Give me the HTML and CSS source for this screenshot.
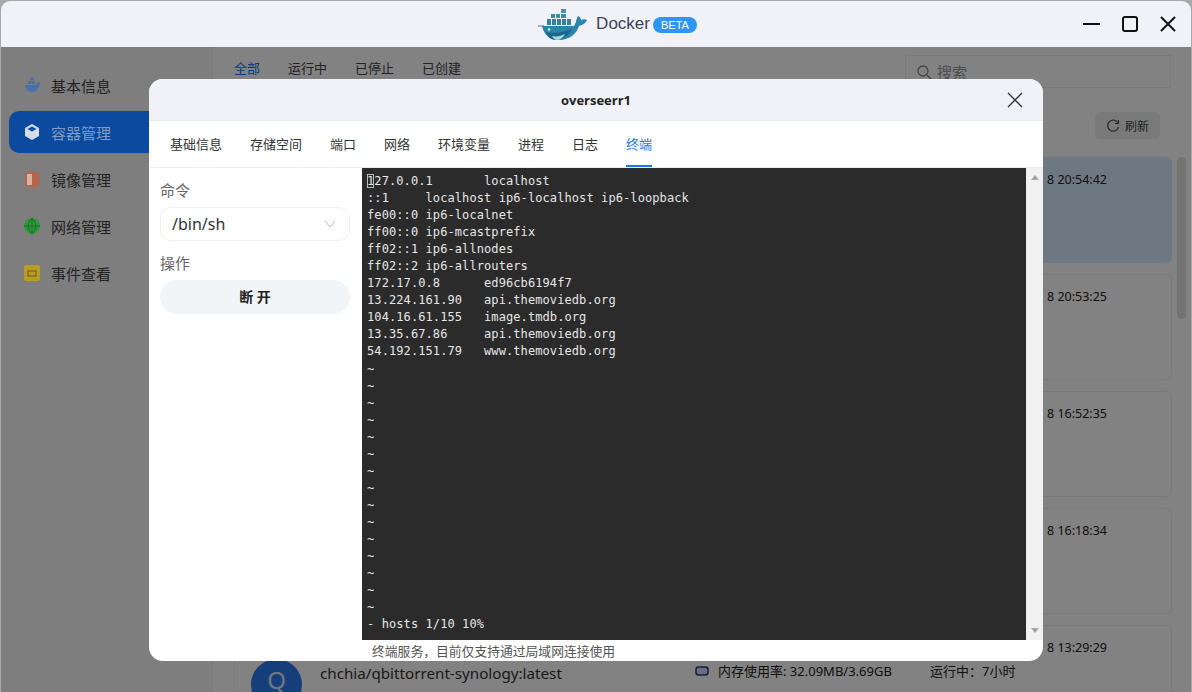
FILE: index.html
```html
<!doctype html>
<html>
<head>
	<meta charset="utf-8">
	<title>Docker</title>
	<link rel="stylesheet" href="styles.css">
</head>
<body>
<div class="app">
	<div class="titlebar">
		<div class="brand">
			<svg class="whale" width="50" height="32" viewBox="0 0 50 32">
				<path fill="#4a95b3" d="M23 0h5v4h-5z"/>
				<path fill="#3f8aa9" d="M13 5h4v4h-4zM18 5h4v4h-4zM23 5h5v4h-5z"/>
				<path fill="#35809f" d="M9 10h4v6H9zM14 10h4v6h-4zM19 10h4v6h-4zM24 10h4v6h-4zM29 10h4v6h-4z"/>
				<path fill="#5f6d75" d="M0 16.500h6v1H0z"/>
				<path fill="#2a84ab" d="M4 17H36c2-2 2-7 4-10l2 1c0 1 1 2 1 3 2-1 4-1 6 0-1 3-4 5-8 6-2 7-9 14-20 14C12 31 6 26 4 17z"/>
				<path fill="#1c678b" d="M8 23c8 2 18 0 26-3-3 6-8 11-16 11-5 0-8-3-10-8z"/>
				<path fill="#a5d6e4" d="M14 27c5 1 9 0 13-2-2 4-5 6-8 6-2 0-4-2-5-4z"/>
				<circle cx="11" cy="20.500" r="1.200" fill="#e8f4f8"/>
			</svg>
			<span class="brand-name">Docker</span>
			<span class="beta">BETA</span>
		</div>
		<div class="win-btns">
			<svg width="18" height="18" viewBox="0 0 18 18"><path d="M0 9h17" stroke="#111" stroke-width="2"/></svg>
			<svg width="18" height="18" viewBox="0 0 18 18"><rect x="2" y="2" width="14" height="14" rx="2" fill="none" stroke="#111" stroke-width="2"/></svg>
			<svg width="18" height="18" viewBox="0 0 18 18"><path d="M2 2l14 14M16 2L2 16" stroke="#111" stroke-width="2"/></svg>
		</div>
	</div>

	<div class="body">
		<div class="sidebar">
			<div class="nav-item">
				<svg width="18" height="18" viewBox="0 0 18 18"><path fill="#4a6fb0" d="M2 9h10c1-2 3-3 5-2-1 6-4 9-8 9-4 0-7-3-7-7z"/><rect x="5" y="5" width="3" height="3" fill="#4a6fb0"/><rect x="8.500" y="5" width="3" height="3" fill="#4a6fb0"/><rect x="7" y="1.500" width="4" height="3" rx="1" fill="#4a6fb0"/></svg>
				基本信息
			</div>
			<div class="nav-item active">
				<svg width="18" height="18" viewBox="0 0 18 18"><path fill="#d5dce8" d="M9 1l7 4v8l-7 4-7-4V5z"/><path fill="#0b4a9e" d="M9 3.500L13.500 6 9 8.500 4.500 6z"/></svg>
				容器管理
			</div>
			<div class="nav-item">
				<svg width="18" height="18" viewBox="0 0 18 18"><rect x="2" y="2" width="14" height="15" rx="3" fill="#b5654c"/><rect x="4" y="4" width="5" height="11" fill="#d8b3a4"/></svg>
				镜像管理
			</div>
			<div class="nav-item">
				<svg width="18" height="18" viewBox="0 0 18 18"><circle cx="9" cy="9" r="8" fill="#2f9a3a"/><path d="M1 9h16M9 1v16M9 1c-5 5-5 11 0 16M9 1c5 5 5 11 0 16" stroke="#1f6e28" stroke-width="1" fill="none"/></svg>
				网络管理
			</div>
			<div class="nav-item">
				<svg width="18" height="18" viewBox="0 0 18 18"><rect x="1" y="1" width="16" height="16" rx="2" fill="#b89c24"/><rect x="5" y="7" width="8" height="5" fill="none" stroke="#7d6a1c" stroke-width="1.300"/></svg>
				事件查看
			</div>
		</div>

		<div class="main">
			<div class="toolbar">
				<div class="filters">
					<span class="filter on">全部</span>
					<span class="filter">运行中</span>
					<span class="filter">已停止</span>
					<span class="filter">已创建</span>
				</div>
				<div class="search">
					<svg width="16" height="16" viewBox="0 0 16 16"><circle cx="7" cy="7" r="5" fill="none" stroke="#888" stroke-width="1.300"/><path d="M11 11l4 4" stroke="#888" stroke-width="1.500"/></svg>
					搜索
				</div>
			</div>
			<div class="refresh-row">
				<div class="refresh">
					<svg width="14" height="14" viewBox="0 0 14 14"><path d="M12 4a5.500 5.500 0 1 0 .5 4" fill="none" stroke="#555" stroke-width="1.200"/><path d="M12.500 1v3.500H9" fill="none" stroke="#555" stroke-width="1.200"/></svg>
					刷新
				</div>
			</div>
			<div class="list-wrap">
				<div class="list">
					<div class="row selected"><div class="time">8 20:54:42</div></div>
					<div class="row"><div class="time">8 20:53:25</div></div>
					<div class="row"><div class="time">8 16:52:35</div></div>
					<div class="row"><div class="time">8 16:18:34</div></div>
					<div class="row">
						<div class="time">8 13:29:29</div>
						<div class="row-main">
							<div class="avatar">Q</div>
							<div class="image-name">chchia/qbittorrent-synology:latest</div>
							<div class="mem">
								<svg width="14" height="10" viewBox="0 0 14 10"><rect x="1" y="1" width="12" height="8" rx="2.500" fill="#cfd6ff" stroke="#2c3a80" stroke-width="1.500"/></svg>
								内存使用率: 32.09MB/3.69GB
							</div>
							<div class="state">运行中：7小时</div>
						</div>
					</div>
				</div>
				<div class="scroll-thumb"></div>
			</div>
		</div>
		<div class="dim"></div>
	</div>

	<div class="modal">
		<div class="modal-head">
			<span class="modal-title">overseerr1</span>
			<svg class="modal-close" width="16" height="16" viewBox="0 0 16 16"><path d="M1 1l14 14M15 1L1 15" stroke="#333" stroke-width="1.300"/></svg>
		</div>
		<div class="tabs">
			<span class="tab">基础信息</span>
			<span class="tab">存储空间</span>
			<span class="tab">端口</span>
			<span class="tab">网络</span>
			<span class="tab">环境变量</span>
			<span class="tab">进程</span>
			<span class="tab">日志</span>
			<span class="tab on">终端</span>
		</div>
		<div class="modal-body">
			<div class="side">
				<div class="label">命令</div>
				<div class="select">
					/bin/sh
					<svg width="12" height="8" viewBox="0 0 12 8"><path d="M1 1l5 6 5-6" fill="none" stroke="#bbb" stroke-width="1"/></svg>
				</div>
				<div class="label second">操作</div>
				<div class="disconnect">断 开</div>
			</div>
			<div class="term-col">
				<div class="term-wrap">
<pre class="term"><span class="cursor">1</span>27.0.0.1       localhost
::1     localhost ip6-localhost ip6-loopback
fe00::0 ip6-localnet
ff00::0 ip6-mcastprefix
ff02::1 ip6-allnodes
ff02::2 ip6-allrouters
172.17.0.8      ed96cb6194f7
13.224.161.90   api.themoviedb.org
104.16.61.155   image.tmdb.org
13.35.67.86     api.themoviedb.org
54.192.151.79   www.themoviedb.org
~
~
~
~
~
~
~
~
~
~
~
~
~
~
~
- hosts 1/10 10%</pre>
					<div class="term-scroll">
						<span class="arrow up"></span>
						<span class="arrow down"></span>
					</div>
				</div>
				<div class="notice">终端服务，目前仅支持通过局域网连接使用</div>
			</div>
		</div>
	</div>
</div>
</body>
</html>
```

FILE: styles.css
```css
*{margin: 0;padding: 0;box-sizing: border-box;}
html,body{height: 100%;overflow: hidden;}
body{
	background: #a8a8a8;
	padding: 1px 1px 0 1px;
	font-family: "Noto Sans","Noto Sans CJK SC",sans-serif;
	color: #222;
}
.app{
	height: 100%;
	position: relative;
	border-radius: 9px 9px 0 0;
	overflow: hidden;
	display: flex;
	flex-direction: column;
}

/* title bar */
.titlebar{
	height: 46px;
	flex: none;
	background: #f1f2f7;
	display: flex;
	align-items: center;
	justify-content: center;
	position: relative;
}
.brand{
	display: flex;
	align-items: center;
	margin-left: 43px;
}
.whale{margin-right: 8px;margin-top: 2px;}
.brand-name{
	font-family: "Liberation Sans",sans-serif;
	font-size: 17px;
	color: #3d4356;
}
.beta{
	font-family: "Liberation Sans",sans-serif;
	font-size: 11px;
	color: #fff;
	background: #2f95f5;
	border-radius: 8px;
	height: 16px;
	line-height: 16px;
	padding: 0 8px;
	margin-left: 3px;
	margin-top: 2px;
}
.win-btns{
	position: absolute;
	right: 14px;
	top: 14px;
	display: flex;
	gap: 20px;
}

/* page under the dialog */
.body{
	flex: 1;
	display: flex;
	position: relative;
	background: #fff;
	min-height: 0;
}
.dim{
	position: absolute;
	left: 0;top: 0;right: 0;bottom: 0;
	background: rgba(0,0,0,0.49);
}
.sidebar{
	width: 212px;
	flex: none;
	padding: 17px 0 0 8px;
	background: #f8f8fa;
	border-right: 1px solid #efefef;
}
.nav-item{
	height: 42px;
	margin-bottom: 5px;
	padding-left: 14px;
	border-radius: 10px;
	display: flex;
	align-items: center;
	gap: 10px;
	font-size: 15px;
	color: #444;
}
/* icons and the active item keep their colour over the dim layer */
.nav-item svg{position: relative;z-index: 2;}
.nav-item.active{background: #0b4a9e;color: #7f9cc4;position: relative;z-index: 2;}
.main{flex: 1;padding: 0 0 0 21px;min-width: 0;}
.toolbar{
	height: 41px;
	display: flex;
	align-items: flex-end;
	justify-content: space-between;
	padding-right: 20px;
}
.filters{
	display: flex;
	align-self: flex-start;
	gap: 28px;
	font-size: 13px;
	padding-top: 11px;
	color: #444;
}
.filter.on{color: #1677f0;}
.search{
	width: 266px;
	height: 33px;
	display: flex;
	align-items: center;
	gap: 5px;
	padding: 0 10px;
	font-size: 15px;
	color: #999;
	border: 1px solid #f0f0f0;
}
.refresh-row{
	display: flex;
	justify-content: flex-end;
	padding: 24px 31px 0 0;
	height: 69px;
}
.refresh{
	width: 65px;
	height: 27px;
	border-radius: 5px;
	background: #f0f0f2;
	display: flex;
	align-items: center;
	justify-content: center;
	gap: 5px;
	font-size: 12px;
	color: #444;
}
.list-wrap{display: flex;gap: 5px;}
.list{width: 938px;display: flex;flex-direction: column;gap: 11px;}
.row{
	height: 106px;
	flex: none;
	border-radius: 5px;
	border: 1px solid #f0f0f0;
	padding: 11px 64px 0 16px;
}
.row.selected{background: #d6ecff;border: none;padding: 12px 65px 0 17px;}
.time{
	text-align: right;
	font-size: 12.5px;
	line-height: 22px;
}
.row-main{
	display: flex;
	align-items: flex-start;
}
.avatar{
	width: 51px;
	height: 51px;
	flex: none;
	border-radius: 50%;
	background: #2b7bef;
	color: #dce9ff;
	font-size: 24px;
	text-align: center;
	line-height: 41px;
}
.image-name{
	width: 393px;
	flex: none;
	padding: 4px 0 0 18px;
	font-size: 15.2px;
	color: #333;
}
.mem{
	width: 235px;
	flex: none;
	display: flex;
	align-items: center;
	gap: 9px;
	padding-top: 2px;
	font-size: 13px;
}
.state{padding-top: 2px;font-size: 13px;}
.scroll-thumb{
	width: 9px;
	height: 162px;
	border-radius: 5px;
	background: #e2e2e2;
}

/* dialog */
.modal{
	position: absolute;
	left: 148px;
	top: 78px;
	width: 894px;
	height: 582px;
	background: #fff;
	border-radius: 14px;
	overflow: hidden;
	display: flex;
	flex-direction: column;
	z-index: 3;
}
.modal-head{
	height: 42px;
	flex: none;
	background: #f1f2f7;
	border-bottom: 1px solid #eaeaea;
	display: flex;
	align-items: center;
	justify-content: center;
	position: relative;
}
.modal-title{font-family: "Open Sans",sans-serif;font-size: 13px;font-weight: 700;color: #222;}
.modal-close{position: absolute;right: 20px;top: 13px;}
.tabs{
	height: 47px;
	flex: none;
	display: flex;
	gap: 28px;
	padding-left: 21px;
	border-bottom: 1px solid #eee;
}
.tab{
	height: 46px;
	line-height: 47px;
	font-size: 13px;
	color: #333;
}
.tab.on{color: #1677f0;border-bottom: 2px solid #1677f0;}
.modal-body{flex: 1;display: flex;min-height: 0;}
.side{width: 213px;flex: none;padding: 11px 12px 0 11px;}
.label{font-size: 15px;line-height: 22px;color: #666;margin-bottom: 6px;}
.label.second{margin: 11px 0 6px;}
.select{
	height: 34px;
	border: 1px solid #f0f0f0;
	border-radius: 11px;
	padding: 0 13px 0 11px;
	display: flex;
	align-items: center;
	justify-content: space-between;
	font-size: 16px;
	color: #333;
}
.disconnect{
	height: 34px;
	line-height: 34px;
	border-radius: 17px;
	background: #f2f5f8;
	text-align: center;
	font-size: 14px;
	font-weight: 700;
	color: #222;
}
.term-col{flex: 1;display: flex;flex-direction: column;min-width: 0;}
.term-wrap{height: 472px;flex: none;display: flex;}
.term{
	flex: 1;
	background: #2b2b2b;
	color: #e6e6e6;
	font-family: "DejaVu Sans Mono",monospace;
	font-size: 12px;
	letter-spacing: 0.09px;
	line-height: 17.04px;
	padding: 5px 0 0 5px;
	white-space: pre;
	overflow: hidden;
}
.cursor{outline: 1px solid #bbb;outline-offset: -1px;}
.term-scroll{
	width: 17px;
	flex: none;
	background: #f1f1f1;
	display: flex;
	flex-direction: column;
	justify-content: space-between;
	align-items: center;
	padding: 7px 0;
}
.arrow{
	width: 0;height: 0;
	border-left: 4px solid transparent;
	border-right: 4px solid transparent;
}
.arrow.up{border-bottom: 5px solid #a5a5a5;}
.arrow.down{border-top: 5px solid #a5a5a5;}
.notice{padding: 2px 0 0 10px;font-size: 12.8px;line-height: 18px;color: #555;}
```
